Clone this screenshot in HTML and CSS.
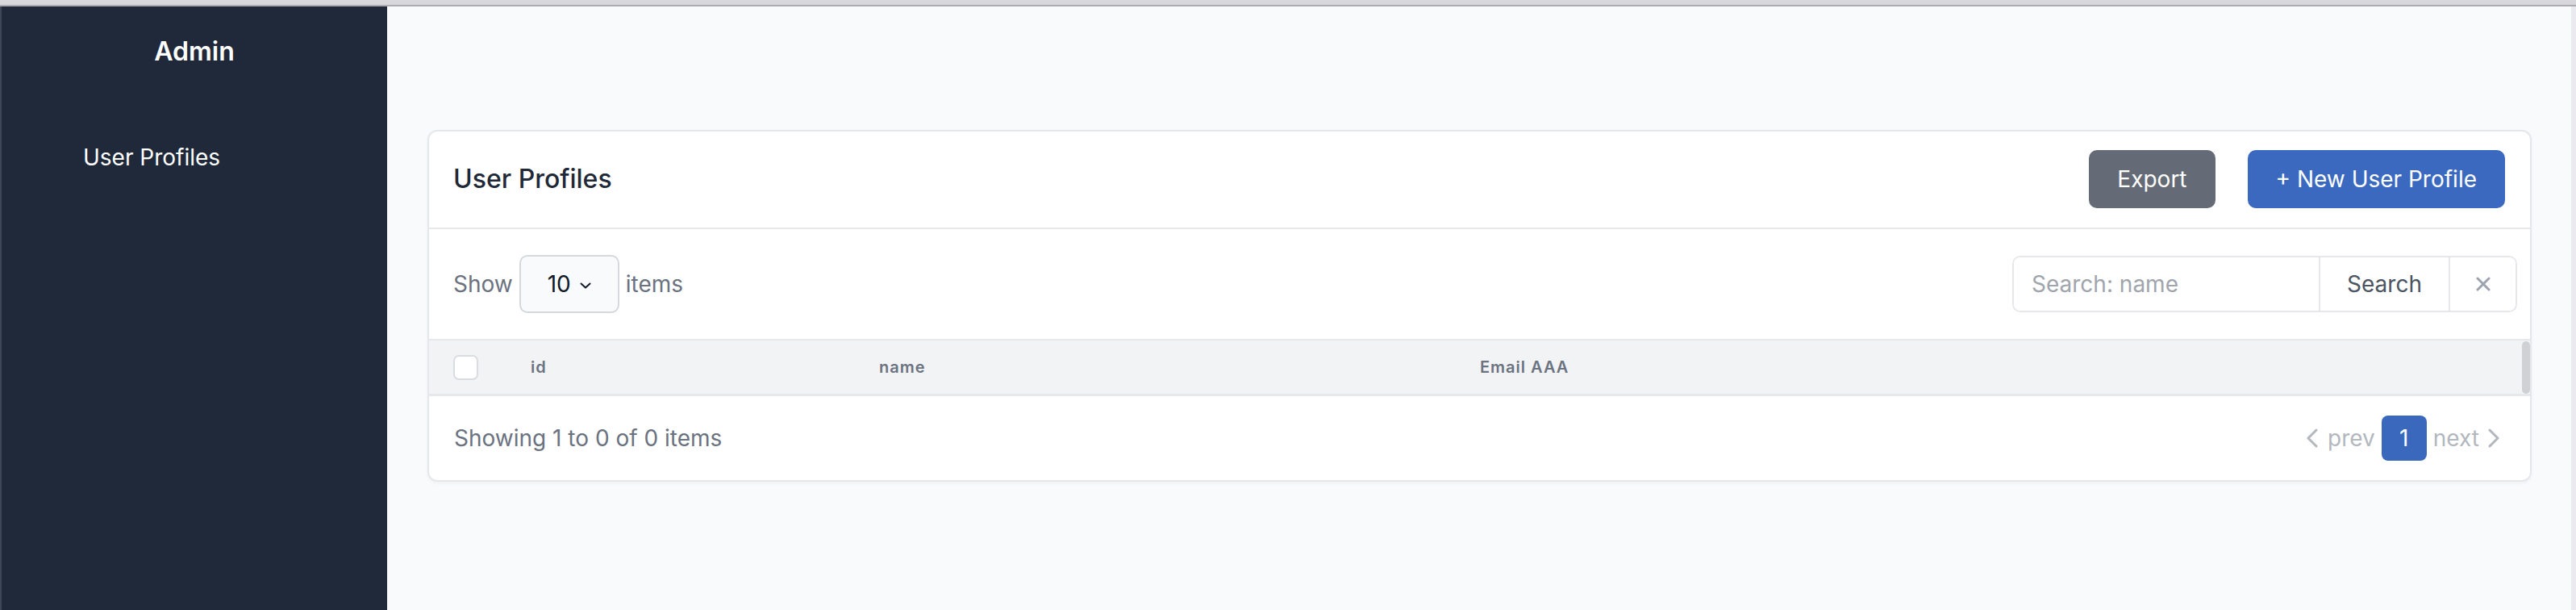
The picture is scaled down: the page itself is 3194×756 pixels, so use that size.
FILE: index.html
```html
<!DOCTYPE html>
<html lang="en">
<head>
<meta charset="utf-8">
<title>Admin - User Profiles</title>
<link rel="stylesheet" href="styles.css">
</head>
<body>
<div class="topbar"></div>
<div class="frame">
  <aside class="sidebar">
    <div class="brand">Admin</div>
    <nav class="nav">
      <a class="nav-link" href="#">User Profiles</a>
    </nav>
  </aside>
  <main class="main">
    <section class="card">
      <header class="card-head">
        <h1 class="card-title">User Profiles</h1>
        <div class="actions">
          <button class="btn btn-grey" type="button">Export</button>
          <button class="btn btn-blue" type="button">+ New User Profile</button>
        </div>
      </header>
      <div class="toolbar">
        <div class="show">
          <span>Show</span>
          <div class="select">
            <span>10</span>
            <svg class="chev-down" width="14" height="8" viewBox="0 0 14 8"><path d="M1.5 1.5 L7 6.5 L12.5 1.5" fill="none" stroke="#111827" stroke-width="2" stroke-linecap="round" stroke-linejoin="round"/></svg>
          </div>
          <span>items</span>
        </div>
        <div class="search">
          <input class="search-input" type="text" placeholder="Search: name">
          <button class="search-btn" type="button">Search</button>
          <button class="clear-btn" type="button" aria-label="Clear">
            <svg width="18" height="18" viewBox="0 0 18 18"><path d="M2 2 L16 16 M16 2 L2 16" fill="none" stroke="#9ca3af" stroke-width="3" stroke-linecap="round"/></svg>
          </button>
        </div>
      </div>
      <div class="table">
        <div class="thead">
          <div class="th"><span class="checkbox"></span></div>
          <div class="th">id</div>
          <div class="th">name</div>
          <div class="th">Email AAA</div>
        </div>
        <div class="scroll"><div class="thumb"></div></div>
      </div>
      <footer class="card-foot">
        <div class="showing">Showing 1 to 0 of 0 items</div>
        <div class="pager">
          <svg class="pchev" width="16" height="24" viewBox="0 0 16 24"><path d="M13 2 L3 12 L13 22" fill="none" stroke="#b3b7be" stroke-width="3" stroke-linecap="round" stroke-linejoin="round"/></svg>
          <span class="pnav">prev</span>
          <span class="page">1</span>
          <span class="pnav">next</span>
          <svg class="pchev" width="16" height="24" viewBox="0 0 16 24"><path d="M3 2 L13 12 L3 22" fill="none" stroke="#b3b7be" stroke-width="3" stroke-linecap="round" stroke-linejoin="round"/></svg>
        </div>
      </footer>
    </section>
  </main>
  <div class="edge"></div>
</div>
</body>
</html>
```

FILE: styles.css
```css
* { box-sizing: border-box; }
html, body { margin: 0; padding: 0; }
body {
  font-family: Inter, "Noto Sans", "Liberation Sans", sans-serif;
  background: #f9fafb;
  width: 3194px;
  height: 756px;
  overflow: hidden;
}
.topbar {
  height: 8px;
  background: #d8d8dc;
  border-bottom: 2px solid #abacb1;
}
.frame {
  display: flex;
  height: 748px;
}
.sidebar {
  width: 480px;
  flex: none;
  background: #20293a;
  border-left: 2px solid #3e4654;
  padding-top: 32px;
}
.brand {
  text-align: center;
  color: #ffffff;
  font-size: 32px;
  font-weight: 600;
  line-height: 48px;
}
.nav {
  margin-top: 87px;
}
.nav-link {
  display: block;
  padding-left: 101px;
  color: #ffffff;
  font-size: 28px;
  line-height: 40px;
  text-decoration: none;
}
.main {
  flex: 1;
  background: #f9fafb;
  padding: 153px 49px 0 50px;
}
.edge {
  width: 6px;
  flex: none;
  background: #ebebef;
}
.card {
  background: #ffffff;
  border: 2px solid #e5e7eb;
  border-radius: 12px;
  box-shadow: 0 2px 4px rgba(0, 0, 0, 0.04);
  overflow: hidden;
}
.card-head {
  display: flex;
  align-items: center;
  justify-content: space-between;
  padding: 23px 31px 24px 30px;
  border-bottom: 2px solid #e5e7eb;
}
.card-title {
  margin: 0;
  font-size: 32px;
  font-weight: 500;
  line-height: 40px;
  color: #1f2937;
}
.actions {
  display: flex;
  gap: 40px;
}
.btn {
  height: 72px;
  padding: 0 35px;
  border: none;
  border-radius: 10px;
  font-family: inherit;
  font-size: 28px;
  font-weight: 400;
  color: #ffffff;
}
.btn-grey { background: #656b76; }
.btn-blue { background: #3b69bf; padding: 0 35px; }
.toolbar {
  display: flex;
  align-items: center;
  justify-content: space-between;
  padding: 32px 16px 32px 30px;
}
.show {
  display: flex;
  align-items: center;
  gap: 8px;
  font-size: 28px;
  color: #6b7280;
}
.select {
  display: flex;
  align-items: center;
  gap: 11px;
  height: 72px;
  padding: 0 33px;
  background: #f9fafb;
  border: 2px solid #d5d8dd;
  border-radius: 10px;
  color: #111827;
  font-size: 28px;
}
.chev-down { margin-top: 4px; }
.search {
  display: flex;
  height: 70px;
  border: 2px solid #e5e7eb;
  border-radius: 10px;
  overflow: hidden;
}
.search-input {
  width: 378px;
  border: none;
  outline: none;
  padding: 0 22px;
  font-family: inherit;
  font-size: 28px;
  color: #111827;
}
.search-input::placeholder { color: #a0a5ad; }
.search-btn {
  width: 161px;
  border: none;
  border-left: 2px solid #e5e7eb;
  background: #ffffff;
  font-family: inherit;
  font-size: 28px;
  color: #4b5563;
}
.clear-btn {
  width: 83px;
  border: none;
  border-left: 2px solid #e5e7eb;
  background: #ffffff;
  display: flex;
  align-items: center;
  justify-content: center;
}
.table {
  display: flex;
  border-top: 2px solid #e5e7eb;
  border-bottom: 3px solid #e5e7eb;
  background: #f2f3f5;
}
.thead {
  flex: 1;
  display: grid;
  grid-template-columns: 96px 432px 745px 1fr;
  align-items: center;
  height: 66px;
  padding-left: 30px;
}
.th {
  font-size: 20px;
  font-weight: 600;
  letter-spacing: 1px;
  color: #6b7280;
  line-height: 24px;
}
.checkbox {
  display: block;
  width: 31px;
  height: 31px;
  background: #ffffff;
  border: 2px solid #d9dce0;
  border-radius: 7px;
}
.scroll {
  width: 12px;
  padding: 1px 0 0 2px;
}
.thumb {
  width: 10px;
  height: 65px;
  background: #cfd1d5;
  border-radius: 5px;
}
.card-foot {
  display: flex;
  align-items: center;
  justify-content: space-between;
  padding: 24px 37px 24px 31px;
}
.showing {
  font-size: 28px;
  color: #6b7280;
  line-height: 40px;
}
.pager {
  display: flex;
  align-items: center;
  font-size: 28px;
  color: #b3b7be;
}
.pnav { line-height: 40px; }
.pchev:first-child { margin-right: 11px; }
.pchev:last-child { margin-left: 10px; }
.page {
  width: 56px;
  height: 56px;
  margin: 0 8px;
  border-radius: 8px;
  background: #3a68bd;
  color: #ffffff;
  display: flex;
  align-items: center;
  justify-content: center;
}
```
